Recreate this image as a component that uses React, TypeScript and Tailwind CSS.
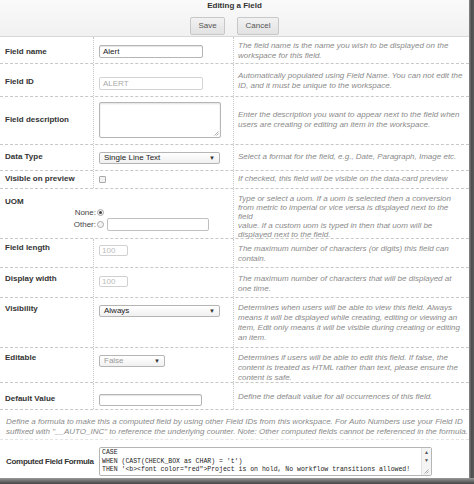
import React from 'react';

type RowProps = {
  label: string;
  h: string;
  lpt: string;
  dpt: string;
  desc: React.ReactNode;
  children?: React.ReactNode;
};

function Row({ label, h, lpt, dpt, desc, children }: RowProps) {
  return (
    <div className={`flex border-b border-dashed border-[#c8c8c8] ${h}`}>
      <div className={`w-[94px] shrink-0 border-r border-dotted border-[#c8c8c8] pl-[5px] font-bold text-[#333] ${lpt}`}>
        {label}
      </div>
      <div className="w-[140px] shrink-0 border-r border-dotted border-[#c8c8c8] pl-[5px]">{children}</div>
      <div className={`flex-1 pl-[4px] pr-[4px] italic text-[#8a8a8a] ${dpt}`}>{desc}</div>
    </div>
  );
}

function Select({ value, w, dim }: { value: string; w: string; dim?: boolean }) {
  return (
    <div
      className={`${w} h-[12px] flex items-center justify-between border border-[#b5b5b5] rounded-[2px] bg-gradient-to-b from-white to-[#f0f0f0] pl-[4px] pr-[4px] ${dim ? 'text-[#999]' : 'text-[#222]'}`}
    >
      <span>{value}</span>
      <span className="text-[6px] text-[#333]">▼</span>
    </div>
  );
}

function Radio({ checked }: { checked?: boolean }) {
  return (
    <div className="w-[7px] h-[7px] rounded-full border border-[#aaa] bg-[#f4f4f4] flex items-center justify-center">
      {checked && <div className="w-[3px] h-[3px] rounded-full bg-[#444]" />}
    </div>
  );
}

export default function App() {
  return (
    <div className="w-[474px] h-[484px] bg-white overflow-hidden flex flex-col font-['Liberation_Sans',Arial,sans-serif] text-[8px] leading-[10px]">
      <div className="flex flex-1 min-h-0">
        <div className="w-[469px] flex flex-col">
          {/* header */}
          <div className="h-[37px] bg-gradient-to-b from-[#fafafa] to-[#f1f1f1] border-b border-[#d8d8d8] flex flex-col items-center">
            <div className="mt-[1px] font-bold text-[#333]">Editing a Field</div>
            <div className="mt-[6px] flex gap-[12px]">
              <div className="w-[35px] h-[18px] border border-[#c8c8c8] rounded-[2px] bg-gradient-to-b from-[#f2f2f2] to-[#e2e2e2] flex items-center justify-center text-[#555]">
                Save
              </div>
              <div className="w-[42px] h-[18px] border border-[#c8c8c8] rounded-[2px] bg-gradient-to-b from-[#f2f2f2] to-[#e2e2e2] flex items-center justify-center text-[#555]">
                Cancel
              </div>
            </div>
          </div>

          <Row
            label="Field name"
            h="h-[27px]"
            lpt="pt-[10px]"
            dpt="pt-[4px]"
            desc={<>The field name is the name you wish to be displayed on the<br />workspace for this field.</>}
          >
            <div className="mt-[8px] w-[104px] h-[13px] border border-[#b5b5b5] rounded-[2px] shadow-[inset_0_1px_1px_#e4e4e4] pl-[3px] text-[#222] leading-[11px]">
              Alert
            </div>
          </Row>

          <Row
            label="Field ID"
            h="h-[33px]"
            lpt="pt-[13px]"
            dpt="pt-[7px]"
            desc={<>Automatically populated using Field Name. You can not edit the<br />ID, and it must be unique to the workspace.</>}
          >
            <div className="mt-[13px] w-[104px] h-[13px] border border-[#d4d4d4] rounded-[2px] pl-[3px] text-[#aaa] leading-[11px]">
              ALERT
            </div>
          </Row>

          <Row
            label="Field description"
            h="h-[48px]"
            lpt="pt-[18px]"
            dpt="pt-[13px]"
            desc={<>Enter the description you want to appear next to the field when<br />users are creating or editing an item in the workspace.</>}
          >
            <div className="relative mt-[5px] w-[122px] h-[36px] border border-[#b5b5b5] rounded-[2px] shadow-[inset_0_1px_2px_#e0e0e0]">
              <svg className="absolute right-[1px] bottom-[1px]" width="5" height="5" viewBox="0 0 5 5">
                <path d="M4.5 0.5 L0.5 4.5 M4.5 2.5 L2.5 4.5" stroke="#999" strokeWidth="0.8" />
              </svg>
            </div>
          </Row>

          <Row
            label="Data Type"
            h="h-[26px]"
            lpt="pt-[7px]"
            dpt="pt-[7px]"
            desc="Select a format for the field, e.g., Date, Paragraph, Image etc."
          >
            <div className="mt-[7px]">
              <Select value="Single Line Text" w="w-[121px]" />
            </div>
          </Row>

          <Row
            label="Visible on preview"
            h="h-[18px]"
            lpt="pt-[3px]"
            dpt="pt-[3px]"
            desc="If checked, this field will be visible on the data-card preview"
          >
            <div className="mt-[5px] w-[7px] h-[7px] border border-[#aaa] rounded-[1px] bg-[#f2f2f2]" />
          </Row>

          {/* UOM */}
          <div className="flex border-b border-dashed border-[#c8c8c8] h-[50px]">
            <div className="w-[234px] shrink-0 border-r border-dotted border-[#c8c8c8] pl-[5px] pt-[8px]">
              <div className="font-bold text-[#333]">UOM</div>
              <div className="flex items-center h-[11px] text-[#444]">
                <span className="w-[92px] text-right pr-[1px]">None:</span>
                <Radio checked />
              </div>
              <div className="flex items-center h-[13px] text-[#444]">
                <span className="w-[92px] text-right pr-[1px]">Other:</span>
                <Radio />
                <div className="ml-[3px] w-[102px] h-[13px] border border-[#c0c0c0] rounded-[2px]" />
              </div>
            </div>
            <div className="flex-1 pl-[4px] pr-[4px] pt-[5px] italic text-[#8a8a8a] leading-[9px]">
              Type or select a uom. If a uom is selected then a conversion<br />
              from metric to imperial or vice versa is displayed next to the field<br />
              value. If a custom uom is typed in then that uom will be<br />
              displayed next to the field.
            </div>
          </div>

          <Row
            label="Field length"
            h="h-[29px]"
            lpt="pt-[4px]"
            dpt="pt-[5px]"
            desc={<>The maximum number of characters (or digits) this field can<br />contain.</>}
          >
            <div className="mt-[6px] w-[29px] h-[11px] border border-[#d0d0d0] rounded-[2px] pl-[2px] text-[#bbb] leading-[9px]">
              100
            </div>
          </Row>

          <Row
            label="Display width"
            h="h-[30px]"
            lpt="pt-[6px]"
            dpt="pt-[6px]"
            desc={<>The maximum number of characters that will be displayed at<br />one time.</>}
          >
            <div className="mt-[8px] w-[29px] h-[11px] border border-[#d0d0d0] rounded-[2px] pl-[2px] text-[#bbb] leading-[9px]">
              100
            </div>
          </Row>

          <Row
            label="Visibility"
            h="h-[50px]"
            lpt="pt-[6px]"
            dpt="pt-[5px]"
            desc={
              <>
                Determines when users will be able to view this field. Always<br />
                means it will be displayed while creating, editing or viewing an<br />
                item, Edit only means it will be visible during creating or editing<br />
                an item.
              </>
            }
          >
            <div className="mt-[7px]">
              <Select value="Always" w="w-[121px]" />
            </div>
          </Row>

          <Row
            label="Editable"
            h="h-[35px]"
            lpt="pt-[5px]"
            dpt="pt-[5px]"
            desc={
              <>
                Determines if users will be able to edit this field. If false, the<br />
                content is treated as HTML rather than text, please ensure the<br />
                content is safe.
              </>
            }
          >
            <div className="mt-[7px]">
              <Select value="False" w="w-[66px]" dim />
            </div>
          </Row>

          <Row
            label="Default Value"
            h="h-[27px]"
            lpt="pt-[11px]"
            dpt="pt-[9px]"
            desc="Define the default value for all occurrences of this field."
          >
            <div className="mt-[11px] w-[103px] h-[12px] border border-[#b5b5b5] rounded-[2px] shadow-[inset_0_1px_1px_#e4e4e4]" />
          </Row>

          <div className="h-[30px] pl-[6px] pt-[7px] italic text-[#8a8a8a] border-b border-dashed border-[#e4e4e4]">
            Define a formula to make this a computed field by using other Field IDs from this workspace. For Auto Numbers use your Field ID<br />
            suffixed with &quot;__AUTO_INC&quot; to reference the underlying counter. Note: Other computed fields cannot be referenced in the formula.
          </div>

          <div className="flex items-start pt-[7px]">
            <div className="w-[99px] shrink-0 pl-[6px] pt-[10px] font-bold text-[#333] whitespace-nowrap tracking-[-0.3px]">
              Computed Field Formula
            </div>
            <div className="relative w-[333px] h-[29px] border border-[#b5b5b5] rounded-[2px] overflow-hidden">
              <pre className="pl-[2px] pt-[1px] font-['Liberation_Mono',monospace] text-[6.5px] leading-[8.5px] text-[#222]">
{`CASE
WHEN (CAST(CHECK_BOX as CHAR) = 't')
THEN '<b><font color="red">Project is on hold, No workflow transitions allowed!`}
              </pre>
              <div className="absolute right-0 top-0 bottom-0 w-[10px] bg-[#f4f4f4] border-l border-[#e4e4e4] flex flex-col items-center">
                <span className="text-[5px] leading-[8px] text-[#555]">▲</span>
                <span className="text-[5px] leading-[8px] text-[#555]">▼</span>
                <svg className="mt-auto mb-[1px]" width="5" height="5" viewBox="0 0 5 5">
                  <path d="M4.5 0.5 L0.5 4.5 M4.5 2.5 L2.5 4.5" stroke="#999" strokeWidth="0.8" />
                </svg>
              </div>
            </div>
          </div>
        </div>
        <div className="w-[5px] bg-gradient-to-r from-[#8a8a8a] via-[#4e4e4e] to-[#5c5c5c]" />
      </div>
      <div className="h-[6px] bg-gradient-to-b from-[#9a9a9a] to-[#444]" />
    </div>
  );
}
